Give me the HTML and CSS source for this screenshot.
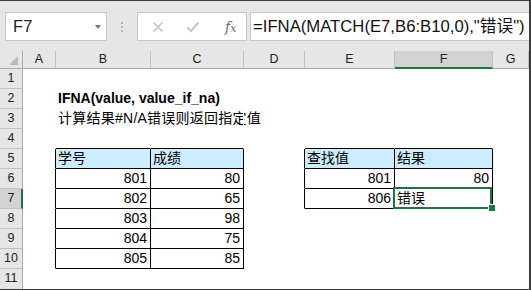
FILE: index.html
```html
<!DOCTYPE html>
<html lang="zh">
<head>
<meta charset="utf-8">
<link rel="stylesheet" href="styles.css">
</head>
<body>
<div class="app">
  <div class="toolbar">
    <div class="namebox"><span class="ref">F7</span><span class="caret"></span></div>
    <div class="grip"><i></i><i></i><i></i></div>
    <div class="fxbox">
      <svg class="ico" width="12" height="12" viewBox="0 0 12 12"><path d="M1.5 1.5 L10.5 10.5 M10.5 1.5 L1.5 10.5" stroke="#c4c4c4" stroke-width="1.6" fill="none"/></svg>
      <svg class="ico" width="14" height="12" viewBox="0 0 14 12"><path d="M1.5 6.5 L5 10 L12.5 1.5" stroke="#c4c4c4" stroke-width="2" fill="none"/></svg>
      <span class="fx">f<span class="x">x</span></span>
    </div>
    <div class="formula">=IFNA(MATCH(E7,B6:B10,0),"错误")</div>
  </div>
  <div class="sheet">
    <div class="corner"><span class="tri"></span></div>
    <div class="ch">A</div><div class="ch">B</div><div class="ch">C</div><div class="ch">D</div><div class="ch">E</div><div class="ch sel">F</div><div class="ch">G</div>

    <div class="rh">1</div><div class="c"></div><div class="c"></div><div class="c"></div><div class="c"></div><div class="c"></div><div class="c"></div><div class="c"></div>

    <div class="rh">2</div><div class="c"></div><div class="c ov bold">IFNA(value, value_if_na)</div><div class="c"></div><div class="c"></div><div class="c"></div><div class="c"></div><div class="c"></div>

    <div class="rh">3</div><div class="c"></div><div class="c ov cjk">计算结果#N/A错误则返回指定值</div><div class="c"></div><div class="c"></div><div class="c"></div><div class="c"></div><div class="c"></div>

    <div class="rh">4</div><div class="c"></div><div class="c bb"></div><div class="c bb"></div><div class="c"></div><div class="c bb"></div><div class="c bb"></div><div class="c"></div>

    <div class="rh">5</div><div class="c br"></div><div class="c t hd">学号</div><div class="c t hd">成绩</div><div class="c br"></div><div class="c t hd">查找值</div><div class="c t hd">结果</div><div class="c"></div>

    <div class="rh">6</div><div class="c br"></div><div class="c t num">801</div><div class="c t num">80</div><div class="c br"></div><div class="c t num">801</div><div class="c t num">80</div><div class="c"></div>

    <div class="rh selr">7</div><div class="c br"></div><div class="c t num">802</div><div class="c t num">65</div><div class="c br"></div><div class="c t num">806</div><div class="c t active">错误<span class="selbox"></span><span class="handle"></span></div><div class="c"></div>

    <div class="rh">8</div><div class="c br"></div><div class="c t num">803</div><div class="c t num">98</div><div class="c"></div><div class="c"></div><div class="c"></div><div class="c"></div>

    <div class="rh">9</div><div class="c br"></div><div class="c t num">804</div><div class="c t num">75</div><div class="c"></div><div class="c"></div><div class="c"></div><div class="c"></div>

    <div class="rh">10</div><div class="c br"></div><div class="c t num">805</div><div class="c t num">85</div><div class="c"></div><div class="c"></div><div class="c"></div><div class="c"></div>

    <div class="rh last">11</div><div class="c"></div><div class="c"></div><div class="c"></div><div class="c"></div><div class="c"></div><div class="c"></div><div class="c"></div>
  </div>
</div>
</body>
</html>
```
FILE: styles.css
```css
* { box-sizing: border-box; }
html, body { margin: 0; padding: 0; background: #ffffff; }
body { width: 531px; height: 290px; overflow: hidden; }
.app {
  width: 531px;
  height: 290px;
  border-top: 1px solid #3a3a3a;
  border-right: 2px solid #3a3a3a;
  border-bottom: 1px solid #3a3a3a;
  background: #e6e6e6;
  font-family: "Liberation Sans", "Noto Sans CJK SC", sans-serif;
  color: #000;
  overflow: hidden;
}
.toolbar {
  height: 50px;
  display: flex;
  align-items: flex-start;
  padding-top: 11px;
  padding-left: 5px;
}
.namebox {
  width: 102px;
  height: 29px;
  background: #fff;
  border: 1px solid #c6c6c6;
  display: flex;
  align-items: center;
  justify-content: space-between;
  padding: 0 5px 0 7px;
}
.ref { font-size: 16.5px; color: #222; letter-spacing: 0.2px; }
.caret {
  width: 0; height: 0;
  border-left: 3.5px solid transparent;
  border-right: 3.5px solid transparent;
  border-top: 4px solid #777;
  margin-top: 1px;
}
.grip {
  width: 30px;
  height: 29px;
  display: flex;
  flex-direction: column;
  align-items: center;
  justify-content: center;
  gap: 2px;
}
.grip i { display: block; width: 2px; height: 2px; background: #b4b4b4; }
.fxbox {
  width: 110px;
  height: 29px;
  background: #fff;
  border: 1px solid #c6c6c6;
  display: flex;
  align-items: center;
  padding-left: 14px;
  gap: 22px;
}
.fx {
  font-family: "DejaVu Serif", "Liberation Serif", serif;
  font-style: italic;
  font-size: 14px;
  color: #6a6a6a;
  margin-left: 3px;
}
.fx .x { font-size: 11px; }
.formula {
  flex: 1;
  height: 29px;
  margin-left: 3px;
  background: #fff;
  border: 1px solid #c6c6c6;
  border-right: none;
  font-size: 16.7px;
  line-height: 27px;
  padding-left: 2px;
  white-space: nowrap;
  overflow: hidden;
  color: #111;
}
.sheet {
  display: grid;
  grid-template-columns: 23px 33px 95px 93px 61px 90px 98px 36px;
  grid-template-rows: 18px repeat(11, 20px);
  background: #fff;
}
.corner {
  background: #e6e6e6;
  border-right: 1px solid #ababab;
  border-bottom: 1px solid #ababab;
  position: relative;
}
.tri {
  position: absolute;
  right: 4px;
  bottom: 3px;
  width: 0; height: 0;
  border-left: 9px solid transparent;
  border-bottom: 9px solid #b9b9b9;
}
.ch {
  background: #e6e6e6;
  border-right: 1px solid #c0c0c0;
  border-bottom: 1px solid #ababab;
  font-size: 12.5px;
  color: #222;
  text-align: center;
  line-height: 17px;
}
.ch.sel {
  background: #d2d2d2;
  border-bottom: 2px solid #217346;
  line-height: 16px;
}
.rh {
  background: #e6e6e6;
  border-right: 1px solid #ababab;
  border-bottom: 1px solid #c0c0c0;
  font-size: 12.5px;
  color: #222;
  text-align: center;
  line-height: 19px;
}
.rh.selr {
  background: #d2d2d2;
  border-right: 2px solid #217346;
  padding-left: 1px;
}
.rh.last { border-bottom: none; }
.c {
  border-right: 1px solid #fff;
  border-bottom: 1px solid #fff;
  font-size: 14px;
  line-height: 19px;
  white-space: nowrap;
  padding: 0 3px 0 2px;
  position: relative;
}
.ov { overflow: visible; }
.bold { font-weight: bold; }
.cjk { letter-spacing: 0.25px; }
.bb { border-bottom-color: #000; }
.br { border-right-color: #000; }
.t { border-right-color: #000; border-bottom-color: #000; }
.hd { background: #ccecff; }
.num { text-align: right; }
.active { z-index: 2; }
.selbox {
  position: absolute;
  left: -2px;
  top: -2px;
  width: 99px;
  height: 22px;
  border: 2px solid #217346;
}
.handle {
  position: absolute;
  left: 94px;
  top: 16px;
  width: 6px;
  height: 6px;
  background: #217346;
  outline: 1px solid #fff;
  z-index: 3;
}
```
